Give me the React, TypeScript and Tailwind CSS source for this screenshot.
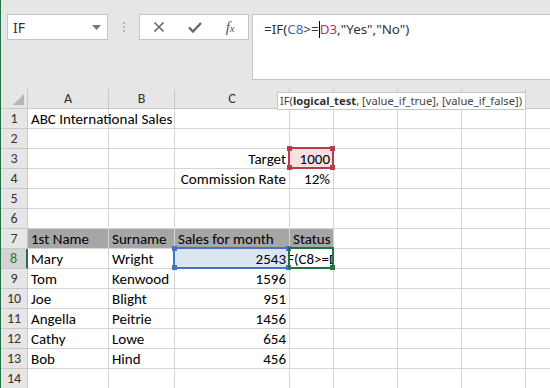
import React from "react";

const COLS = [
  { k: "A", w: "w-[81px]" },
  { k: "B", w: "w-[66px]" },
  { k: "C", w: "w-[115px]" },
  { k: "D", w: "w-[44px]" },
  { k: "E", w: "w-[64px]" },
  { k: "F", w: "w-[64px]" },
  { k: "G", w: "w-[64px]" },
  { k: "H", w: "w-[64px]" },
];

type Cell = { t?: string; r?: boolean };
const DATA: Record<number, Record<string, Cell>> = {
  1: { A: { t: "ABC International Sales" } },
  3: { C: { t: "Target", r: true }, D: { t: "1000", r: true } },
  4: { C: { t: "Commission Rate", r: true }, D: { t: "12%", r: true } },
  7: { A: { t: "1st Name" }, B: { t: "Surname" }, C: { t: "Sales for month" }, D: { t: "Status" } },
  8: { A: { t: "Mary" }, B: { t: "Wright" }, C: { t: "2543", r: true } },
  9: { A: { t: "Tom" }, B: { t: "Kenwood" }, C: { t: "1596", r: true } },
  10: { A: { t: "Joe" }, B: { t: "Blight" }, C: { t: "951", r: true } },
  11: { A: { t: "Angella" }, B: { t: "Peitrie" }, C: { t: "1456", r: true } },
  12: { A: { t: "Cathy" }, B: { t: "Lowe" }, C: { t: "654", r: true } },
  13: { A: { t: "Bob" }, B: { t: "Hind" }, C: { t: "456", r: true } },
};

const FONT = { fontFamily: "Carlito, Calibri, 'Open Sans', sans-serif" };
const UI = { fontFamily: "'Segoe UI', 'Noto Sans', 'Open Sans', sans-serif" };

function Handles({ color }: { color: string }) {
  const base = `absolute w-[5px] h-[5px] ${color}`;
  return (
    <>
      <div className={`${base} -left-[3px] -top-[3px]`} />
      <div className={`${base} -right-[3px] -top-[3px]`} />
      <div className={`${base} -left-[3px] -bottom-[3px]`} />
      <div className={`${base} -right-[3px] -bottom-[3px]`} />
    </>
  );
}

function Row({ n }: { n: number }) {
  const row = DATA[n] || {};
  const sel = n === 8;
  return (
    <div className="flex h-[20px] overflow-visible">
      <div
        className={`w-[27px] shrink-0 h-full border-b border-r border-[#c8c8c8] flex items-center justify-center text-[14px] ${
          sel ? "bg-[#d3d3d3] text-[#217346] border-r-2 border-r-[#217346]" : "bg-[#e6e6e6] text-[#333]"
        }`}
        style={FONT}
      >
        {n}
      </div>
      {COLS.map((c) => {
        const cell = row[c.k];
        const hdr = n === 7 && ["A", "B", "C", "D"].includes(c.k);
        const isC8 = n === 8 && c.k === "C";
        const isD3 = n === 3 && c.k === "D";
        const isD8 = n === 8 && c.k === "D";
        return (
          <div
            key={c.k}
            className={`${c.w} shrink-0 h-full border-b border-r border-[#d4d4d4] relative flex items-center ${
              cell?.r ? "justify-end pr-[3px]" : "pl-[3px]"
            } ${hdr ? "bg-[#a6a6a6]" : ""} ${isC8 ? "bg-[#dce6f2]" : ""} ${isD3 ? "bg-[#f7dfe2]" : ""}`}
          >
            {cell?.t && (
              <span className="text-[15px] text-black whitespace-nowrap leading-none pt-[1px]" style={FONT}>
                {cell.t}
              </span>
            )}
            {isC8 && (
              <div className="absolute -left-[2px] -top-[2px] -right-[1px] -bottom-[1px] border-2 border-[#4472c4] z-10">
                <Handles color="bg-[#4472c4]" />
              </div>
            )}
            {isD3 && (
              <div className="absolute -left-[2px] -top-[2px] -right-[1px] -bottom-[1px] border-2 border-[#b83b4a] z-10">
                <Handles color="bg-[#b83b4a]" />
              </div>
            )}
            {isD8 && (
              <>
                <div className="absolute inset-0 overflow-hidden flex items-center">
                  <span className="text-[15px] text-black whitespace-nowrap leading-none pt-[1px] -ml-[3px]" style={FONT}>
                    F(C8&gt;=D3,"Yes"
                  </span>
                </div>
                <div className="absolute -left-[2px] -top-[2px] -right-[1px] -bottom-[1px] border-2 border-[#217346] z-20">
                  <div className="absolute w-[5px] h-[5px] bg-[#217346] -right-[3px] -bottom-[3px]" />
                </div>
              </>
            )}
          </div>
        );
      })}
    </div>
  );
}

export default function App() {
  return (
    <div className="w-[550px] h-[388px] overflow-hidden bg-white relative border-l border-[#217346]">
      {/* toolbar */}
      <div className="h-[89px] bg-[#e6e6e6] flex items-start pt-[14px]">
        <div className="ml-[6px] w-[101px] shrink-0 h-[26px] bg-white border border-[#c6c6c6] flex items-center justify-between pl-[5px] pr-[6px]">
          <span className="text-[14px] text-[#333]" style={UI}>IF</span>
          <svg width="9" height="5" viewBox="0 0 9 5"><path d="M0 0 L9 0 L4.5 5 Z" fill="#777" /></svg>
        </div>
        <div className="w-[31px] shrink-0 h-[26px] flex flex-col items-center justify-center gap-[2px]">
          <div className="w-[2px] h-[2px] bg-[#b4b4b4]" />
          <div className="w-[2px] h-[2px] bg-[#b4b4b4]" />
          <div className="w-[2px] h-[2px] bg-[#b4b4b4]" />
        </div>
        <div className="w-[110px] shrink-0 h-[26px] bg-white border border-[#c6c6c6] flex items-center">
          <div className="w-[37px] flex justify-center pl-[2px]">
            <svg width="12" height="12" viewBox="0 0 12 12"><path d="M1.5 1.5 L10.5 10.5 M10.5 1.5 L1.5 10.5" stroke="#666" strokeWidth="1.6" /></svg>
          </div>
          <div className="w-[36px] flex justify-center">
            <svg width="14" height="12" viewBox="0 0 14 12"><path d="M1 6.5 L5 10.5 L13 2" stroke="#666" strokeWidth="2.4" fill="none" /></svg>
          </div>
          <div className="w-[36px] flex justify-center">
            <span className="text-[15px] italic text-[#555] leading-none" style={{ fontFamily: "'Liberation Serif', serif" }}>
              f<span className="text-[11px]">x</span>
            </span>
          </div>
        </div>
        <div className="ml-[3px] flex-1 h-[66px] bg-white border border-r-0 border-[#c6c6c6] pl-[11px] pt-[1px]">
          <span className="text-[13.4px] text-[#333] whitespace-nowrap" style={UI}>
            =IF(<span className="text-[#3c6bbd]">C8</span>&gt;=
            <span className="inline-block w-[1px] h-[17px] bg-black align-middle -mt-[2px]" />
            <span className="text-[#c0304a]">D3</span>,"Yes","No")
          </span>
        </div>
      </div>
      {/* column header */}
      <div className="flex h-[20px] bg-[#e6e6e6]">
        <div className="w-[27px] shrink-0 h-full border-b border-r border-[#c8c8c8] relative">
          <svg className="absolute right-[3px] bottom-[3px]" width="11" height="11" viewBox="0 0 11 11">
            <path d="M11 0 L11 11 L0 11 Z" fill="#b6b6b6" />
          </svg>
        </div>
        {COLS.map((c) => (
          <div
            key={c.k}
            className={`${c.w} shrink-0 h-full border-b border-r border-[#c8c8c8] flex items-center justify-center text-[14px] text-[#333]`}
            style={FONT}
          >
            {c.k === "H" ? "" : c.k}
          </div>
        ))}
      </div>
      {Array.from({ length: 14 }, (_, i) => (
        <Row key={i + 1} n={i + 1} />
      ))}
      {/* tooltip */}
      <div
        className="absolute left-[276px] top-[92px] w-[249px] h-[18px] bg-white border border-[#c6c6c6] flex items-center pl-[2px] text-[11.2px] text-[#444] whitespace-nowrap z-30"
        style={UI}
      >
        IF(<b className="font-bold text-[#333]">logical_test</b>, [value_if_true], [value_if_false])
      </div>
    </div>
  );
}
